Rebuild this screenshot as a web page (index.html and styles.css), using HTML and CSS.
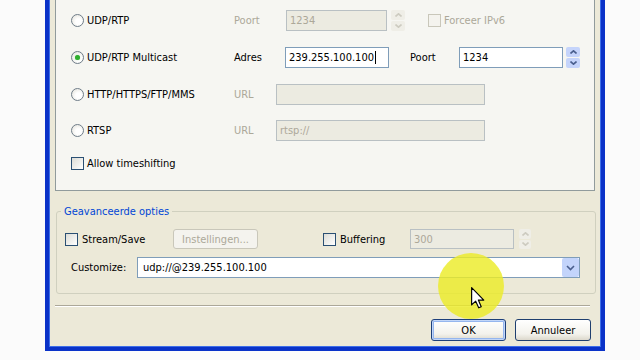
FILE: index.html
```html
<!DOCTYPE html>
<html lang="nl">

<head>
  <meta charset="UTF-8">
  <title>Netwerkstroom openen</title>
  <link rel="stylesheet" href="styles.css">
</head>

<body>
  <div class="window">
    <div class="panel">
      <div class="row">
        <label class="choice"><span class="radio"></span>UDP/RTP</label>
        <span class="lbl w52 off">Poort</span>
        <span class="field off w101">1234</span>
        <span class="spin off ml4">
          <span><svg width="7" height="4" viewBox="0 0 7 4"><path d="M0.5 3.5 L3.5 0.8 L6.5 3.5" /></svg></span>
          <span><svg width="7" height="4" viewBox="0 0 7 4"><path d="M0.5 0.5 L3.5 3.2 L6.5 0.5" /></svg></span>
        </span>
        <label class="opt ipv6 off"><span class="box off"></span>Forceer IPv6</label>
      </div>

      <div class="row">
        <label class="choice"><span class="radio on"></span>UDP/RTP Multicast</label>
        <span class="lbl w51">Adres</span>
        <span class="field w104">239.255.100.100<span class="caret"></span></span>
        <span class="lbl w49 ml21">Poort</span>
        <span class="field w104">1234</span>
        <span class="spin ml3">
          <span><svg width="7" height="4" viewBox="0 0 7 4"><path d="M0.5 3.5 L3.5 0.8 L6.5 3.5" /></svg></span>
          <span><svg width="7" height="4" viewBox="0 0 7 4"><path d="M0.5 0.5 L3.5 3.2 L6.5 0.5" /></svg></span>
        </span>
      </div>

      <div class="row">
        <label class="choice"><span class="radio"></span>HTTP/HTTPS/FTP/MMS</label>
        <span class="lbl w42 off">URL</span>
        <span class="field off w209"></span>
      </div>

      <div class="row row-tight">
        <label class="choice"><span class="radio"></span>RTSP</label>
        <span class="lbl w42 off">URL</span>
        <span class="field off w209">rtsp://</span>
      </div>

      <div class="row row-check">
        <label class="opt"><span class="box"></span>Allow timeshifting</label>
      </div>
    </div>

    <fieldset class="group">
      <legend>Geavanceerde opties</legend>
      <div class="group-row">
        <label class="opt stream"><span class="box"></span>Stream/Save</label>
        <span class="btn off">Instellingen...</span>
        <label class="opt buffering"><span class="box"></span>Buffering</label>
        <span class="field off w104 h20">300</span>
        <span class="spin off small ml5">
          <span><svg width="7" height="4" viewBox="0 0 7 4"><path d="M0.5 3.5 L3.5 0.8 L6.5 3.5" /></svg></span>
          <span><svg width="7" height="4" viewBox="0 0 7 4"><path d="M0.5 0.5 L3.5 3.2 L6.5 0.5" /></svg></span>
        </span>
      </div>
      <div class="group-row custom">
        <span class="custom-lbl">Customize:</span>
        <span class="field combo">
          <span class="combo-text">udp://@239.255.100.100</span>
          <span class="drop"><svg width="9" height="6" viewBox="0 0 9 6"><path d="M1 1 L4.5 4.5 L8 1" /></svg></span>
        </span>
      </div>
    </fieldset>

    <div class="separator"></div>

    <div class="actions">
      <span class="btn default">OK</span>
      <span class="btn">Annuleer</span>
    </div>
  </div>

  <div class="highlight"></div>
  <svg class="pointer" width="14" height="22" viewBox="0 0 12 19">
    <path d="M0.5 0.5 L0.5 15.5 L4 12.2 L6.6 18 L8.8 17 L6.3 11.3 L11 11.3 Z" fill="#fff" stroke="#000" stroke-width="1" stroke-linejoin="round" />
  </svg>
</body>

</html>
```

FILE: styles.css
```css
body {
  margin: 0;
  background: #fbfbfb;
  font-family: "DejaVu Sans Condensed", "DejaVu Sans", sans-serif;
  font-stretch: condensed;
  font-size: 11px;
  color: #000;
}

.window {
  box-sizing: border-box;
  width: 560px;
  margin-left: 45px;
  padding: 0 6px 0 6px;
  background: #ece9d8;
  border: 4px solid #0a32c8;
  border-top: none;
  box-shadow: inset 1px 0 0 #3d6ee8, inset -1px 0 0 #3d6ee8, inset 0 -1px 0 #3d6ee8;
}

.panel {
  padding: 10px 0 20px 15px;
  background: #f6f6f2;
  border: 1px solid #919b9c;
  border-top: none;
}

.row {
  display: flex;
  align-items: center;
  height: 21px;
  margin-top: 16px;
}

.row:first-child {
  margin-top: 0;
}

.row-tight {
  margin-top: 15px;
}

.row-check {
  height: 13px;
}

.choice {
  display: flex;
  align-items: center;
  width: 163px;
}

.radio {
  box-sizing: border-box;
  width: 13px;
  height: 13px;
  margin-right: 3px;
  border: 1px solid #6f7d89;
  border-radius: 50%;
  background: radial-gradient(circle at 60% 60%, #ffffff 30%, #e4e3dc 90%);
  display: flex;
  align-items: center;
  justify-content: center;
}

.radio.on::after {
  content: "";
  width: 5px;
  height: 5px;
  border-radius: 50%;
  background: #2fae2f;
  box-shadow: 0 0 1px #6fd46f;
}

.box {
  box-sizing: border-box;
  width: 13px;
  height: 13px;
  margin-right: 3px;
  border: 1px solid #2a4f73;
  background: linear-gradient(135deg, #dcdcd6, #ffffff);
}

.box.off {
  border-color: #c9c7ba;
  background: #f4f3ee;
}

.opt {
  display: flex;
  align-items: center;
}

.off {
  color: #aca899;
}

.lbl {
  display: inline-block;
}

.w42 { width: 42px; }
.w49 { width: 49px; }
.w51 { width: 51px; }
.w52 { width: 52px; }
.w101 { width: 101px; }
.w104 { width: 104px; }
.w209 { width: 209px; }
.ml3 { margin-left: 3px; }
.ml4 { margin-left: 4px; }
.ml5 { margin-left: 5px; }
.ml21 { margin-left: 21px; }

.field {
  box-sizing: border-box;
  display: flex;
  align-items: center;
  height: 21px;
  padding: 0 3px;
  background: #fff;
  border: 1px solid #7f9db9;
}

.field.off {
  background: #ecebe1;
  border-color: #b9c0c3;
}

.h20 {
  height: 20px;
}

.caret {
  width: 1px;
  height: 13px;
  margin-left: 1px;
  background: #000;
}

.spin {
  display: flex;
  flex-direction: column;
  gap: 1px;
  width: 14px;
  height: 21px;
}

.spin span {
  flex: 1;
  display: flex;
  align-items: center;
  justify-content: center;
  background: #c5d4fb;
  border-radius: 2px;
  color: #4a5f8e;
}

.spin.off span {
  background: #efeee7;
  color: #cdcbc0;
}

.spin.small {
  width: 12px;
  height: 20px;
}

.spin path,
.drop path {
  fill: none;
  stroke: currentColor;
  stroke-width: 1.6;
}

.ipv6 {
  margin-left: 23px;
}

.group {
  margin: 14px -1px 0 1px;
  padding: 11px 8px 15px 8px;
  border: 1px solid #d0d0bf;
  border-radius: 3px;
}

.group legend {
  margin-left: -4px;
  padding: 0 3px;
  line-height: 13px;
  color: #0046d5;
}

.group-row {
  display: flex;
  align-items: center;
  height: 20px;
}

.stream {
  width: 108px;
}

.stream .box,
.buffering .box {
  margin-right: 4px;
}

.buffering {
  width: 87px;
  margin-left: 65px;
}

.btn {
  box-sizing: border-box;
  display: inline-flex;
  align-items: center;
  justify-content: center;
  width: 76px;
  height: 22px;
  border: 1px solid #1f3f6f;
  border-radius: 3px;
  background: linear-gradient(#ffffff, #f3f2ec 70%, #dcd8cc);
}

.btn.off {
  width: 85px;
  height: 20px;
  border-color: #c9c7ba;
  background: #f4f3ee;
}

.btn.default {
  width: 75px;
  border-color: #1d3f7a;
  box-shadow: inset 0 0 0 1px #c2d6f8, inset 0 0 0 2px #95b6ee;
}

.custom {
  height: 21px;
  margin-top: 8px;
}

.custom-lbl {
  width: 66px;
  padding-left: 6px;
}

.combo {
  width: 443px;
  padding: 0 0 0 5px;
}

.combo-text {
  flex: 1;
}

.drop {
  display: flex;
  align-items: center;
  justify-content: center;
  width: 17px;
  height: 19px;
  background: #c3d4fb;
  border-radius: 2px;
  color: #4a5f8e;
}

.separator {
  margin: 11px 5px 0 0;
  border-top: 1px solid #aca899;
  border-bottom: 1px solid #ffffff;
}

.actions {
  display: flex;
  justify-content: flex-end;
  gap: 9px;
  padding: 12px 4px 6px 0;
}

.highlight {
  position: absolute;
  left: 438px;
  top: 253px;
  width: 66px;
  height: 66px;
  border-radius: 50%;
  background: rgba(236, 236, 40, 0.82);
}

.pointer {
  position: absolute;
  left: 471px;
  top: 287px;
}
```
